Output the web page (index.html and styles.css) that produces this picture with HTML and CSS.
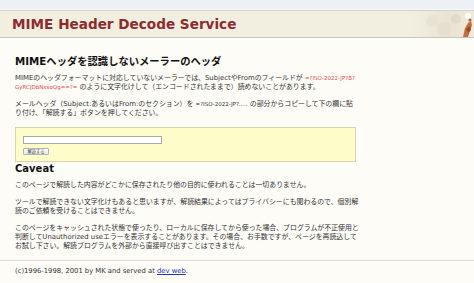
FILE: index.html
```html
<!DOCTYPE html>
<html lang="ja">
<head>
<meta charset="utf-8">
<title>MIME Header Decode Service</title>
<link rel="stylesheet" href="styles.css">
</head>
<body>
<div class="topbar"></div>
<header class="banner">
  <h1 class="site-title">MIME Header Decode Service</h1>
  <div class="banner-art">
    <svg width="64" height="27" viewBox="0 0 64 27" aria-hidden="true">
      <circle cx="22" cy="10" r="6" fill="#e6dfcf" opacity="0.7"/>
      <circle cx="34" cy="18" r="7" fill="#e2dac8" opacity="0.6"/>
      <circle cx="46" cy="8" r="5" fill="#ddd5c2" opacity="0.7"/>
      <circle cx="58" cy="5" r="3" fill="#ffffff" opacity="0.8"/>
      <path d="M53 26 L55 17 L58 12 L61 10 L62 14 L60 20 L58 26 Z" fill="#c2703c"/>
      <path d="M56 18 L60 15 L61 19 L58 22 Z" fill="#9c4a22"/>
      <circle cx="60" cy="9" r="1.6" fill="#b86536"/>
    </svg>
  </div>
</header>
<main class="content">
  <h2 class="title">MIMEヘッダを認識しないメーラーのヘッダ</h2>
  <p class="para">MIMEのヘッダフォーマットに対応していないメーラーでは、SubjectやFromのフィールドが <span class="code red">=?ISO-2022-JP?B?GyRCJDbNxsoQg==?=</span> のように文字化けして（エンコードされたままで）読めないことがあります。</p>
  <p class="para">メールヘッダ（Subject:あるいはFrom:のセクション）を <span class="code">=?ISO-2022-JP?.....</span> の部分からコピーして下の欄に貼<br>り付け、「解読する」ボタンを押してください。</p>
  <form class="decode-box">
    <input class="field" type="text">
    <button class="btn" type="button">解読する</button>
  </form>
  <h2 class="caveat">Caveat</h2>
  <p class="para">このページで解読した内容がどこかに保存されたり他の目的に使われることは一切ありません。</p>
  <p class="para">ツールで解読できない文字化けもあると思いますが、解読結果によってはプライバシーにも関わるので、個別解読のご依頼を受けることはできません。</p>
  <p class="para">このページをキャッシュされた状態で使ったり、ローカルに保存してから使った場合、プログラムが不正使用と判断してUnauthorized useエラーを表示することがあります。その場合、お手数ですが、ページを再読込してお試し下さい。解読プログラムを外部から直接呼び出すことはできません。</p>
</main>
<footer class="footer">(c)1996-1998, 2001 by MK and served at <a class="link" href="#">dev web</a>.</footer>
</body>
</html>
```
FILE: styles.css
```css
html, body {
  margin: 0;
  padding: 0;
}
body {
  background: #fdfcf7;
  color: #333;
  font-family: "DejaVu Sans", "Noto Sans CJK JP", sans-serif;
}
.topbar {
  height: 9px;
  background: #edf1f7;
  border-bottom: 1px solid #f7f8fa;
}
.banner {
  display: flex;
  justify-content: space-between;
  align-items: stretch;
  height: 26px;
  background: #f2efe1;
  border-top: 1px solid #d3d0c6;
  border-bottom: 1px solid #cac6b6;
}
.site-title {
  margin: 0;
  padding-left: 12px;
  font-family: "DejaVu Sans", sans-serif;
  font-weight: bold;
  font-size: 13.6px;
  line-height: 27px;
  color: #8e2b2e;
}
.banner-art {
  width: 64px;
  background: linear-gradient(to right, rgba(232,226,212,0), #e9e3d5 60%, #efeadf);
}
.banner-art svg {
  display: block;
}
.content {
  width: 347px;
  margin-left: 15px;
}
.title {
  margin: 16px 0 6px;
  font-family: "DejaVu Sans", "Noto Sans CJK JP", sans-serif;
  font-weight: bold;
  font-size: 10.3px;
  line-height: 14px;
  color: #111;
}
.para {
  margin: 0 0 8px;
  font-size: 6.9px;
  line-height: 9px;
}
.code {
  font-size: 5.5px;
}
.red {
  color: #e5484a;
}
.decode-box {
  box-sizing: border-box;
  display: flex;
  flex-direction: column;
  align-items: flex-start;
  gap: 4px;
  width: 341px;
  height: 35px;
  margin: 9px 0 0;
  padding: 8px 7px 7px;
  background: #fefdc9;
  border: 1px solid #d8d5ad;
}
.field {
  box-sizing: border-box;
  width: 139px;
  height: 8px;
  margin: 0;
  padding: 0;
  background: #fff;
  border: 1px solid #a9a9a9;
}
.btn {
  box-sizing: border-box;
  height: 7px;
  width: 26px;
  margin: 0;
  padding: 0;
  font-family: "Noto Sans CJK JP", sans-serif;
  font-size: 4.2px;
  line-height: 5px;
  color: #444;
  background: linear-gradient(#ffffff, #e8e8e8);
  border: 1px solid #b5b5b5;
  border-radius: 1px;
}
.caveat {
  margin: 0 0 6px;
  font-family: "DejaVu Sans", sans-serif;
  font-weight: bold;
  font-size: 10px;
  line-height: 13px;
  color: #111;
}
.footer {
  margin-top: 9px;
  padding: 5px 0 0 15px;
  border-top: 1px solid #dcdad2;
  font-size: 6.8px;
  line-height: 10px;
  color: #333;
}
.link {
  color: #2233bb;
}
```
